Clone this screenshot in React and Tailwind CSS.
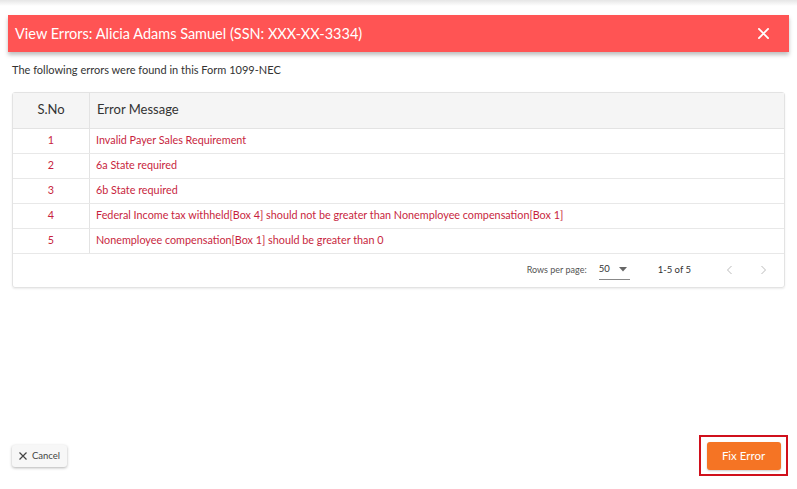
import React from 'react';

const errors = [
  'Invalid Payer Sales Requirement',
  '6a State required',
  '6b State required',
  'Federal Income tax withheld[Box 4] should not be greater than Nonemployee compensation[Box 1]',
  'Nonemployee compensation[Box 1] should be greater than 0',
];

export default function App() {
  return (
    <div className="relative w-[797px] h-[489px] bg-white overflow-hidden" style={{ fontFamily: 'Lato, "Open Sans", sans-serif' }}>
      <div className="h-[6px] bg-gradient-to-b from-[#e6e6e6] to-white" />

      <div className="mt-[9px] mx-[8px] h-[37px] bg-[#ff5454] flex items-center justify-between pl-[7px] pr-[20px] shadow-[0_3px_4px_rgba(0,0,0,0.25)]">
        <span className="text-white text-[14.5px]">View Errors: Alicia Adams Samuel (SSN: XXX-XX-3334)</span>
        <svg width="11" height="11" viewBox="0 0 12 12" className="text-white">
          <path d="M1 1L11 11M11 1L1 11" stroke="currentColor" strokeWidth="2" strokeLinecap="round" />
        </svg>
      </div>

      <div className="px-[12px]">
        <p className="mt-[10px] text-[11px] text-[#333]">The following errors were found in this Form 1099-NEC</p>

        <div className="mt-[13px] border border-[#e3e3e3] rounded-[3px] shadow-[0_1px_2px_rgba(0,0,0,0.08)]">
          <div className="flex h-[36px] bg-[#f5f5f5] border-b border-[#e3e3e3] text-[13px] text-[#333]">
            <div className="w-[77px] border-r border-[#e3e3e3] flex items-center justify-center">S.No</div>
            <div className="flex-1 flex items-center pl-[7px]">Error Message</div>
          </div>
          {errors.map((e, i) => (
            <div key={i} className="flex h-[25px] border-b border-[#e8e8e8] text-[10.8px] text-[#c81f3e]">
              <div className="w-[77px] border-r border-[#e3e3e3] flex items-center justify-center">{i + 1}</div>
              <div className="flex-1 flex items-center pl-[6px]">{e}</div>
            </div>
          ))}
          <div className="h-[33px] flex items-center justify-end text-[9px] text-[#555]">
            <span>Rows per page:</span>
            <div className="ml-[12px] w-[31px] h-[20px] border-b border-[#888] flex items-center justify-between text-[9.5px] text-[#333]">
              <span>50</span>
              <svg width="8" height="5" viewBox="0 0 8 5" className="mr-[3px]"><path d="M0 0H8L4 4.5Z" fill="#666" /></svg>
            </div>
            <span className="ml-[28px] text-[9.5px] text-[#333]">1-5 of 5</span>
            <svg width="7" height="10" viewBox="0 0 7 10" className="ml-[35px]"><path d="M5.5 1L1.5 5L5.5 9" fill="none" stroke="#bbb" strokeWidth="1" /></svg>
            <svg width="7" height="10" viewBox="0 0 7 10" className="ml-[27px] mr-[17px]"><path d="M1.5 1L5.5 5L1.5 9" fill="none" stroke="#bbb" strokeWidth="1" /></svg>
          </div>
        </div>
      </div>

      <div className="absolute left-0 right-0 top-[435px] flex items-center justify-between px-[12px]">
        <button className="mt-[1px] h-[22px] pl-[7px] pr-[7px] flex items-center gap-[5px] bg-[#f7f7f7] rounded-[3px] shadow-[0_1px_3px_rgba(0,0,0,0.3)] text-[9.5px] text-[#444]">
          <svg width="8" height="8" viewBox="0 0 8 8"><path d="M0.5 0.5L7.5 7.5M7.5 0.5L0.5 7.5" stroke="#444" strokeWidth="1.2" /></svg>
          Cancel
        </button>
        <div className="mr-[-3px] w-[89px] h-[41px] border-2 border-[#d0101c] flex items-center justify-center">
          <button className="w-[74px] h-[28px] bg-[#f57424] rounded-[3px] text-white text-[11.5px] shadow-[0_1px_2px_rgba(0,0,0,0.2)]">Fix Error</button>
        </div>
      </div>
    </div>
  );
}
